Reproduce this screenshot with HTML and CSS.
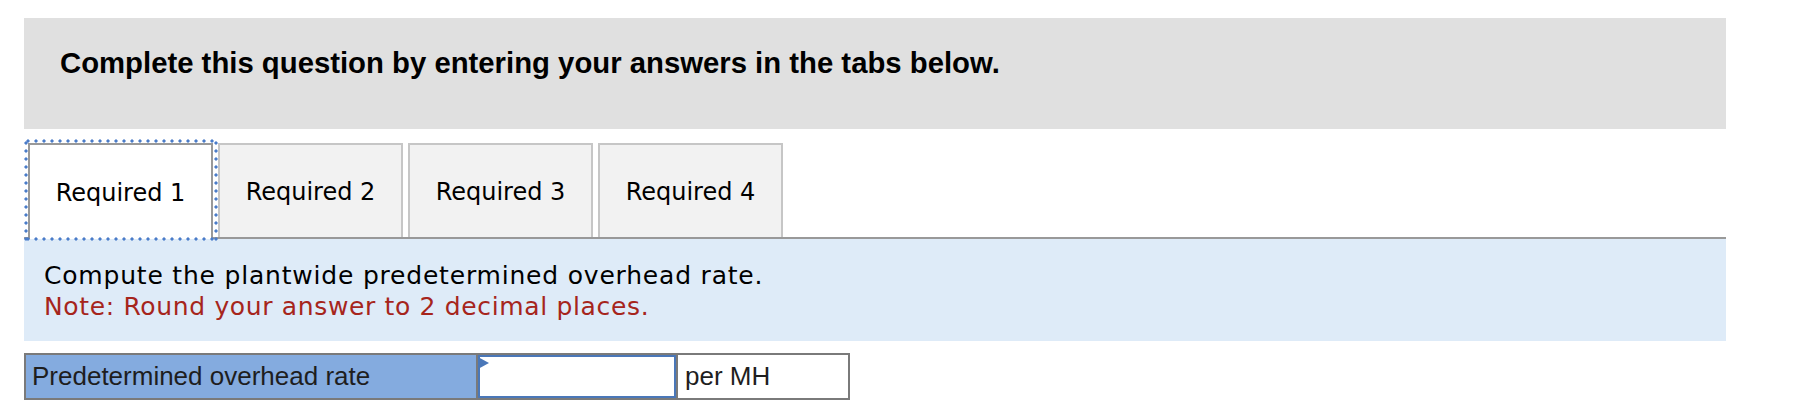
FILE: index.html
```html
<!DOCTYPE html>
<html lang="en">
<head>
<meta charset="utf-8">
<title>Required 1</title>
<link rel="stylesheet" href="styles.css">
</head>
<body>
<div class="page">
  <div class="banner">
    <h1 class="banner-title">Complete this question by entering your answers in the tabs below.</h1>
  </div>
  <div class="tabs">
    <div class="tab tab-active">Required 1</div>
    <div class="tab">Required 2</div>
    <div class="tab">Required 3</div>
    <div class="tab">Required 4</div>
  </div>
  <div class="panel">
    <p class="panel-q">Compute the plantwide predetermined overhead rate.</p>
    <p class="panel-note">Note: Round your answer to 2 decimal places.</p>
  </div>
  <div class="answer">
    <div class="answer-label">Predetermined overhead rate</div>
    <div class="answer-input"><span class="answer-flag"></span><input class="answer-field" type="text" aria-label="Predetermined overhead rate"></div>
    <div class="answer-unit">per MH</div>
  </div>
</div>
</body>
</html>
```
FILE: styles.css
```css
html, body {
  margin: 0;
  padding: 0;
  background: #ffffff;
}

.page {
  padding: 18px 0 0 24px;
  width: 1702px;
}

.banner {
  box-sizing: border-box;
  height: 111px;
  background: #e0e0e0;
  padding: 28px 0 0 36px;
}

.banner-title {
  margin: 0;
  font-family: "Liberation Sans", Arial, sans-serif;
  font-weight: bold;
  font-size: 29.3px;
  line-height: 34px;
  color: #000000;
}

.tabs {
  margin-top: 14px;
  padding-left: 4px;
  display: flex;
  align-items: flex-start;
  gap: 5px;
  border-bottom: 2px solid #999999;
}

.tab {
  box-sizing: border-box;
  width: 185px;
  height: 94px;
  border: 2px solid #c6c6c6;
  border-bottom: none;
  background: #f2f2f2;
  display: flex;
  align-items: center;
  justify-content: center;
  padding-top: 2px;
  font-family: "DejaVu Sans", Verdana, sans-serif;
  font-size: 24px;
  color: #000000;
}

.tab-active {
  position: relative;
  height: 96px;
  margin-bottom: -2px;
  background: #ffffff;
  border-color: #999999;
}

.tab-active::after {
  content: "";
  position: absolute;
  left: -6px;
  top: -6px;
  right: -7px;
  bottom: -2px;
  background-image:
    radial-gradient(circle, #4a7cc9 0 1.3px, transparent 1.9px),
    radial-gradient(circle, #4a7cc9 0 1.3px, transparent 1.9px),
    radial-gradient(circle, #4a7cc9 0 1.3px, transparent 1.9px),
    radial-gradient(circle, #4a7cc9 0 1.3px, transparent 1.9px);
  background-size: 8px 4px, 8px 4px, 4px 8px, 4px 8px;
  background-repeat: repeat-x, repeat-x, repeat-y, repeat-y;
  background-position: left top, left bottom, left top, right top;
  pointer-events: none;
}

.panel {
  background: #deebf8;
  padding: 21px 20px 19px 20px;
}

.panel p {
  margin: 0;
  font-family: "DejaVu Sans", Verdana, sans-serif;
  font-size: 25px;
  line-height: 31px;
  letter-spacing: 0.8px;
}

.panel-q {
  color: #000000;
}

.panel .panel-note {
  color: #a6251c;
  letter-spacing: 0.65px;
}

.answer {
  margin-top: 12px;
  display: flex;
  width: max-content;
  height: 47px;
  box-sizing: border-box;
  border: 2px solid #7a7a7a;
}

.answer-label {
  box-sizing: border-box;
  width: 452px;
  background: #84abdf;
  border-right: 2px solid #7a7a7a;
  padding-left: 6px;
  display: flex;
  align-items: center;
  font-family: "Liberation Sans", Arial, sans-serif;
  font-size: 26px;
  color: #1e1e1e;
}

.answer-input {
  position: relative;
  box-sizing: border-box;
  width: 198px;
  border: 2px solid #4a77b8;
  background: #ffffff;
}

.answer-flag {
  position: absolute;
  left: -2px;
  top: 0;
  width: 0;
  height: 0;
  border-left: 11px solid #4a77b8;
  border-top: 6.5px solid transparent;
  border-bottom: 6.5px solid transparent;
}

.answer-field {
  box-sizing: border-box;
  width: 100%;
  height: 100%;
  border: none;
  outline: none;
  background: transparent;
  padding: 0 6px;
  font-family: "Liberation Sans", Arial, sans-serif;
  font-size: 26px;
}

.answer-unit {
  box-sizing: border-box;
  width: 172px;
  border-left: 2px solid #7a7a7a;
  padding-left: 7px;
  display: flex;
  align-items: center;
  background: #ffffff;
  font-family: "Liberation Sans", Arial, sans-serif;
  font-size: 26px;
  color: #1e1e1e;
}
```
